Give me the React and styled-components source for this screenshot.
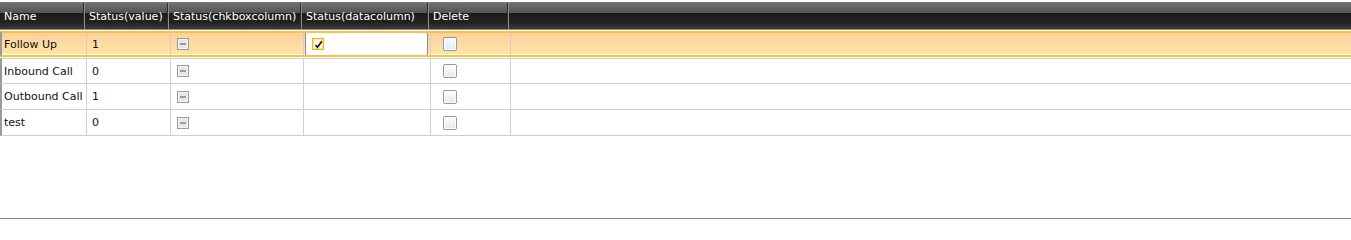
import styled, { createGlobalStyle } from "styled-components";

const GlobalStyle = createGlobalStyle`
  html, body {
    margin: 0;
    padding: 0;
    background: #fff;
  }
  body {
    font-family: "DejaVu Sans", Verdana, sans-serif;
    font-size: 11px;
  }
`;

const COLS = "85px 84px 133px 127px 80px 1fr";

const Page = styled.div`
  height: 224px;
  padding-top: 2px;
  box-sizing: border-box;
  display: flex;
  flex-direction: column;
`;

const Grid = styled.div`
  flex: 1;
  display: flex;
  flex-direction: column;
  border-bottom: 1px solid #8a8a8a;
  margin-bottom: 5px;
`;

const HeaderRow = styled.div`
  display: grid;
  grid-template-columns: ${COLS};
  height: 26px;
  border-top: 1px solid #7a7a7a;
  border-bottom: 1px solid #8c8c8c;
  background: linear-gradient(
    #6e6e6e 0%,
    #555 38%,
    #1c1c1c 40%,
    #222 75%,
    #3a3a3a 100%
  );
`;

const HeaderCell = styled.div`
  display: flex;
  align-items: center;
  padding: 1px 0 0 4px;
  color: #fff;
  white-space: nowrap;
  border-right: 1px solid #8e8e8e;
  box-shadow: inset -1px 0 0 #2a2a2a;
  &:last-child {
    border-right: none;
    box-shadow: none;
  }
`;

const Row = styled.div`
  display: grid;
  grid-template-columns: ${COLS};
  height: 26px;
  box-sizing: border-box;
  border-left: 2px solid #9a9a9a;
  ${({ selected }) =>
    selected
      ? `
    margin-top: 1px;
    border-top: 2px solid #f6c33c;
    border-bottom: 2px solid #f6c33c;
    box-shadow: 0 1px 0 #fff, inset 0 -1px 0 #fff;
    background: linear-gradient(#fdd09f, #fce6a4);
  `
      : `
    border-bottom: 1px solid #cfcfcf;
    background: #fff;
  `}
  &:nth-child(3) {
    border-top: 1px solid #cfcfcf;
    margin-top: 1px;
    height: 26px;
  }
`;

const Cell = styled.div`
  display: flex;
  align-items: center;
  padding-left: ${({ pad }) => pad ?? 3}px;
  color: #111;
  white-space: nowrap;
  overflow: hidden;
  border-right: 1px solid #cfcfcf;
  &:first-child {
    padding-left: 2px;
  }
  &:last-child {
    border-right: none;
  }
`;

const ReadOnlyBox = styled.span`
  width: 12px;
  height: 12px;
  box-sizing: border-box;
  border: 1px solid #9a9a9a;
  background: #e6e6e6;
  display: flex;
  align-items: center;
  justify-content: center;
  box-shadow: inset 0 0 0 1px #f4f4f4;
  &::after {
    content: "";
    width: 6px;
    height: 2px;
    background: #9b9b9b;
  }
`;

const CheckBox = styled.span`
  width: 14px;
  height: 14px;
  box-sizing: border-box;
  border: 1px solid #8e9aa6;
  border-radius: 2px;
  background: linear-gradient(#fdfdfe, #e3e8ef);
  box-shadow: inset 0 0 0 1px #fff;
`;

const Editor = styled.div`
  flex: 1;
  align-self: stretch;
  margin: -1px 2px -1px 1px;
  border: 1px solid #8a8a8a;
  border-radius: 2px;
  background: #fff;
  display: flex;
  align-items: center;
  padding-left: 6px;
`;

const CheckedBox = styled.span`
  width: 12px;
  height: 12px;
  box-sizing: border-box;
  border: 1px solid #f7b50c;
  background: #fff9e6;
  box-shadow: inset 0 0 0 1px #fde59a;
  display: flex;
  align-items: center;
  justify-content: center;
`;

const rows = [
  { name: "Follow Up", value: "1" },
  { name: "Inbound Call", value: "0" },
  { name: "Outbound Call", value: "1" },
  { name: "test", value: "0" },
];

const headers = [
  "Name",
  "Status(value)",
  "Status(chkboxcolumn)",
  "Status(datacolumn)",
  "Delete",
  "",
];

export default function App() {
  return (
    <>
      <GlobalStyle />
      <Page>
        <Grid>
          <HeaderRow>
            {headers.map((h, i) => (
              <HeaderCell key={i}>{h}</HeaderCell>
            ))}
          </HeaderRow>
          {rows.map((r, i) => (
            <Row key={r.name} selected={i === 0}>
              <Cell>{r.name}</Cell>
              <Cell pad={5}>{r.value}</Cell>
              <Cell pad={6}>
                <ReadOnlyBox />
              </Cell>
              <Cell pad={0}>
                {i === 0 && (
                  <Editor>
                    <CheckedBox>
                      <svg width="9" height="9" viewBox="0 0 9 9">
                        <path
                          d="M1.5 5 L3.5 7.3 L7.8 1.2"
                          fill="none"
                          stroke="#111"
                          strokeWidth="1.6"
                        />
                      </svg>
                    </CheckedBox>
                  </Editor>
                )}
              </Cell>
              <Cell pad={12}>
                <CheckBox />
              </Cell>
              <Cell />
            </Row>
          ))}
        </Grid>
      </Page>
    </>
  );
}
